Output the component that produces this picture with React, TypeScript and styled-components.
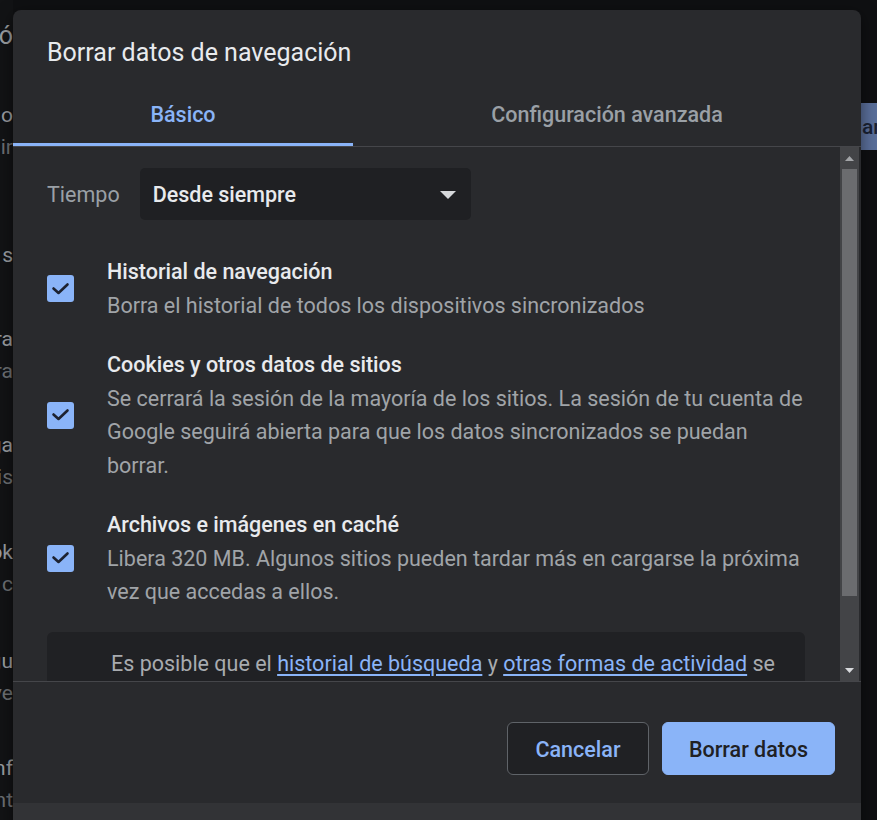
import React from "react";
import styled, { createGlobalStyle } from "styled-components";

const Global = createGlobalStyle`
  html, body { margin: 0; padding: 0; background: #0f1012; overflow: hidden; }
  body { font-family: Roboto, "Liberation Sans", Arial, sans-serif; -webkit-font-smoothing: antialiased; }
  #root { width: 877px; height: 820px; }
  * { box-sizing: border-box; }
`;

const Page = styled.div`
  position: relative;
  width: 877px;
  height: 820px;
  overflow: hidden;
  background: #0f1012;
  display: flex;
  justify-content: space-between;
`;

/* ---------- background settings page (mostly hidden behind the modal) ---------- */
const LeftPane = styled.div`
  width: 13px;
  display: flex;
  flex-direction: column;
  background: #121315;
`;

const BgRow = styled.div<{ $top: number }>`
  margin-top: ${(p) => p.$top}px;
  display: flex;
  flex-direction: column;
`;

const BgLine = styled.div<{ $dim?: boolean; $big?: boolean }>`
  height: ${(p) => (p.$big ? 34 : 32)}px;
  display: flex;
  align-items: center;
  justify-content: flex-end;
  white-space: nowrap;
  overflow: hidden;
  font-size: ${(p) => (p.$big ? 25 : 21)}px;
  color: ${(p) => (p.$dim ? "#6d7074" : "#9a9da1")};
`;

const RightPane = styled.div`
  width: 16px;
  display: flex;
  flex-direction: column;
  background: #0f1012;
`;

const BgButton = styled.div`
  margin-top: 103px;
  height: 47px;
  background: #5a6f9a;
  color: #1a2233;
  font-size: 21px;
  font-weight: 500;
  display: flex;
  align-items: center;
  padding-left: 1px;
  white-space: nowrap;
  overflow: hidden;
`;

/* ---------- modal dialog ---------- */
const Dialog = styled.div`
  position: absolute;
  left: 13px;
  top: 10px;
  width: 848px;
  height: 840px;
  background: #292a2d;
  border-radius: 8px;
  display: flex;
  flex-direction: column;
  box-shadow: 0 4px 16px rgba(0, 0, 0, 0.5);
  overflow: hidden;
`;

const Title = styled.h1`
  margin: 0;
  height: 75px;
  padding: 28px 0 0 34px;
  font-size: 25px;
  line-height: 30px;
  font-weight: 400;
  color: #e8eaed;
`;

const TabBar = styled.div`
  display: flex;
  border-bottom: 1px solid #45464a;
`;

const Tab = styled.div<{ $active?: boolean; $w?: number }>`
  ${(p) => (p.$w ? `width: ${p.$w}px;` : "flex: 1;")}
  height: 61px;
  display: flex;
  align-items: center;
  justify-content: center;
  padding-top: 1px;
  border-bottom: 3px solid ${(p) => (p.$active ? "#8ab4f8" : "transparent")};
  font-size: 21.5px;
  font-weight: 500;
  color: ${(p) => (p.$active ? "#8ab4f8" : "#9aa0a6")};
`;

const Body = styled.div`
  height: 534px;
  display: flex;
`;

const Content = styled.div`
  flex: 1;
  overflow: hidden;
  padding: 21px 35px 0 34px;
`;

const TimeRow = styled.div`
  display: flex;
  align-items: center;
  gap: 20px;
`;

const Label = styled.span`
  font-size: 21.5px;
  color: #9aa0a6;
`;

const Select = styled.div`
  width: 331px;
  height: 52px;
  background: #1f2023;
  border-radius: 5px;
  display: flex;
  align-items: center;
  justify-content: space-between;
  padding: 1px 15px 0 13px;
  font-size: 21.5px;
  font-weight: 500;
  color: #e8eaed;
`;

const List = styled.div`
  margin-top: 35px;
  display: flex;
  flex-direction: column;
  gap: 26px;
`;

const Item = styled.div`
  display: flex;
  align-items: center;
  gap: 33px;
`;

const CheckBox = styled.div`
  flex: none;
  width: 27px;
  height: 27px;
  border-radius: 3px;
  background: #8ab4f8;
  display: flex;
  align-items: center;
  justify-content: center;
`;

const ItemText = styled.div`
  display: flex;
  flex-direction: column;
  font-size: 21.5px;
  line-height: 33.5px;
`;

const ItemTitle = styled.div`
  font-weight: 500;
  color: #e8eaed;
`;

const ItemDesc = styled.div`
  color: #a0a4a8;
`;

const Notice = styled.div`
  margin-top: 23px;
  background: #202124;
  border-radius: 6px;
  padding: 15px 30px 20px 64px;
  font-size: 21.5px;
  line-height: 33.5px;
  color: #a8abaf;
`;

const Link = styled.a`
  color: #8ab4f8;
  text-decoration: underline;
  text-underline-offset: 3px;
`;

const Scrollbar = styled.div`
  width: 19px;
  margin-right: 2px;
  background: #434447;
  display: flex;
  flex-direction: column;
`;

const ScrollBtn = styled.div`
  height: 22px;
  display: flex;
  align-items: center;
  justify-content: center;
`;

const Thumb = styled.div`
  height: 427px;
  margin: 0 2px;
  background: #6b6c6f;
`;

const TrackRest = styled.div`
  flex: 1;
`;

const Footer = styled.div`
  border-top: 1px solid #45464a;
  display: flex;
  justify-content: flex-end;
  gap: 13px;
  padding: 40px 26px 28px 0;
`;

const Button = styled.button<{ $primary?: boolean }>`
  height: 53px;
  width: ${(p) => (p.$primary ? 173 : 142)}px;
  padding-top: 3px;
  border-radius: 6px;
  font-family: inherit;
  font-size: 21.5px;
  font-weight: 500;
  cursor: pointer;
  border: 1px solid ${(p) => (p.$primary ? "#8ab4f8" : "#5f6368")};
  background: ${(p) => (p.$primary ? "#8ab4f8" : "#202124")};
  color: ${(p) => (p.$primary ? "#202124" : "#8ab4f8")};
`;

const BottomStrip = styled.div`
  flex: 1;
  background: #323336;
`;

const Check = () => (
  <svg width="19" height="14" viewBox="0 0 19 14">
    <path d="M2.5 6.5 L7.5 11 L16.5 2.5" fill="none" stroke="#1d2230" strokeWidth="2.6" strokeLinecap="round" strokeLinejoin="round" />
  </svg>
);

const Triangle = ({ w, h, color, up }: { w: number; h: number; color: string; up?: boolean }) => (
  <svg width={w} height={h} viewBox={`0 0 ${w} ${h}`}>
    <polygon points={up ? `0,${h} ${w / 2},0 ${w},${h}` : `0,0 ${w},0 ${w / 2},${h}`} fill={color} />
  </svg>
);

const items = [
  {
    title: "Historial de navegación",
    desc: "Borra el historial de todos los dispositivos sincronizados",
  },
  {
    title: "Cookies y otros datos de sitios",
    desc: "Se cerrará la sesión de la mayoría de los sitios. La sesión de tu cuenta de Google seguirá abierta para que los datos sincronizados se puedan borrar.",
  },
  {
    title: "Archivos e imágenes en caché",
    desc: "Libera 320 MB. Algunos sitios pueden tardar más en cargarse la próxima vez que accedas a ellos.",
  },
];

const bgRows: { top: number; lines: { t: string; dim?: boolean; big?: boolean }[] }[] = [
  { top: 18, lines: [{ t: "Privacidad y seguridad ió", big: true }] },
  { top: 47, lines: [{ t: "Borrar datos de navegació o" }, { t: "Borra cookies, caché y más iir", dim: true }] },
  { top: 76, lines: [{ t: "Privacidad y s" }] },
  { top: 52, lines: [{ t: "Cookies de tercera" }, { t: "Las cookies de tercera", dim: true }] },
  { top: 42, lines: [{ t: "Navega" }, { t: "Navegación segura y ris", dim: true }] },
  { top: 43, lines: [{ t: "Cook" }, { t: "Otras c", dim: true }] },
  { top: 45, lines: [{ t: "Segu" }, { t: "Navegación segura y protección ve", dim: true }] },
  { top: 43, lines: [{ t: "Configuración de sitios nf" }, { t: "Controla la información nt", dim: true }] },
];

export default function App() {
  return (
    <>
      <Global />
      <Page>
        <LeftPane>
          {bgRows.map((r, i) => (
            <BgRow key={i} $top={r.top}>
              {r.lines.map((l, j) => (
                <BgLine key={j} $dim={l.dim} $big={l.big}>
                  {l.t}
                </BgLine>
              ))}
            </BgRow>
          ))}
        </LeftPane>
        <RightPane>
          <BgButton>ar</BgButton>
        </RightPane>

        <Dialog role="dialog">
          <Title>Borrar datos de navegación</Title>
          <TabBar>
            <Tab $active $w={340}>Básico</Tab>
            <Tab>Configuración avanzada</Tab>
          </TabBar>
          <Body>
            <Content>
              <TimeRow>
                <Label>Tiempo</Label>
                <Select>
                  <span>Desde siempre</span>
                  <Triangle w={16} h={8} color="#d6d8db" />
                </Select>
              </TimeRow>
              <List>
                {items.map((it) => (
                  <Item key={it.title}>
                    <CheckBox>
                      <Check />
                    </CheckBox>
                    <ItemText>
                      <ItemTitle>{it.title}</ItemTitle>
                      <ItemDesc>{it.desc}</ItemDesc>
                    </ItemText>
                  </Item>
                ))}
              </List>
              <Notice>
                Es posible que el <Link>historial de búsqueda</Link> y <Link>otras formas de actividad</Link> se
                guarden en tu cuenta de Google cuando inicies sesión. Puedes eliminarlos en cualquier momento.
              </Notice>
            </Content>
            <Scrollbar>
              <ScrollBtn>
                <Triangle w={9} h={5} color="#a3a5a8" up />
              </ScrollBtn>
              <Thumb />
              <TrackRest />
              <ScrollBtn>
                <Triangle w={9} h={5} color="#d8dadd" />
              </ScrollBtn>
            </Scrollbar>
          </Body>
          <Footer>
            <Button>Cancelar</Button>
            <Button $primary>Borrar datos</Button>
          </Footer>
          <BottomStrip />
        </Dialog>
      </Page>
    </>
  );
}
